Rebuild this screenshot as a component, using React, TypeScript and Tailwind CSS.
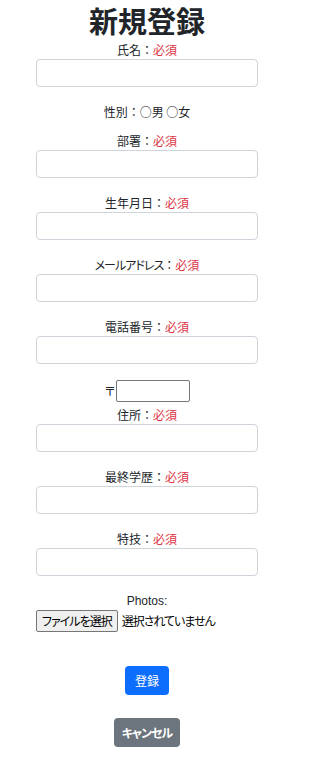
import React from "react";

const font = { fontFamily: '"Noto Sans CJK JP", "Noto Sans", sans-serif' };

function Field({ label, className = "" }: { label: React.ReactNode; className?: string }) {
  return (
    <div className={`flex flex-col items-center ${className}`}>
      <label className="block text-[12px] leading-[18px] text-[#212529] text-center whitespace-nowrap">
        {label}
        <span>：</span>
        <span className="text-[#dc3545]">必須</span>
      </label>
      <input
        type="text"
        className="block w-[222px] h-[28px] border border-[#ced4da] rounded-[4px] bg-white outline-none"
      />
    </div>
  );
}

export default function App() {
  return (
    <div className="w-[294px] bg-white text-[#212529]" style={font}>
      <div className="flex flex-col items-center">
        <h1 className="text-[29px] font-bold leading-[36px] pt-[2px] mb-[3px] text-[#212529]">新規登録</h1>

        <Field label="氏名" className="mb-[16px]" />

        <div className="text-[12px] leading-[18px] mb-[11px]">性別：○男 ○女</div>

        <Field label="部署" className="mb-[16px]" />
        <Field label="生年月日" className="mb-[16px]" />
        <Field
          label={<span className="[font-feature-settings:'palt'] tracking-[-1px]">メールアドレス</span>}
          className="mb-[16px]"
        />
        <Field label="電話番号" className="mb-[16px]" />

        <div className="flex items-center h-[22px] mb-[4px] text-[12px]">
          <span>〒</span>
          <input type="text" className="w-[74px] h-[22px] border border-[#767676] rounded-[2px] bg-white outline-none" />
        </div>

        <Field label="住所" className="mb-[16px]" />
        <Field label="最終学歴" className="mb-[16px]" />
        <Field label="特技" className="mb-[16px]" />

        <div
          className="text-[12px] leading-[18px] text-[#212529]"
          style={{ fontFamily: '"Liberation Sans", Arial, sans-serif' }}
        >
          Photos:
        </div>
        <div className="w-[222px] flex items-center h-[22px] text-[12px] mb-[34px] whitespace-nowrap">
          <button
            type="button"
            className="h-[22px] px-[5px] border border-[#767676] rounded-[2px] bg-[#efefef] text-[12px] text-black leading-none whitespace-nowrap [font-feature-settings:'palt'] tracking-[-1px]"
          >
            ファイルを選択
          </button>
          <span className="ml-[4px] text-black [font-feature-settings:'palt'] tracking-[-1px]">選択されていません</span>
        </div>

        <button
          type="button"
          className="h-[29px] w-[44px] rounded-[4px] bg-[#0d6efd] text-white text-[12px] mb-[23px]"
        >
          登録
        </button>
        <button
          type="button"
          className="h-[29px] w-[66px] rounded-[4px] bg-[#6c757d] text-white text-[12px] font-bold whitespace-nowrap [font-feature-settings:'palt'] tracking-[-1px]"
        >
          キャンセル
        </button>
      </div>
    </div>
  );
}
